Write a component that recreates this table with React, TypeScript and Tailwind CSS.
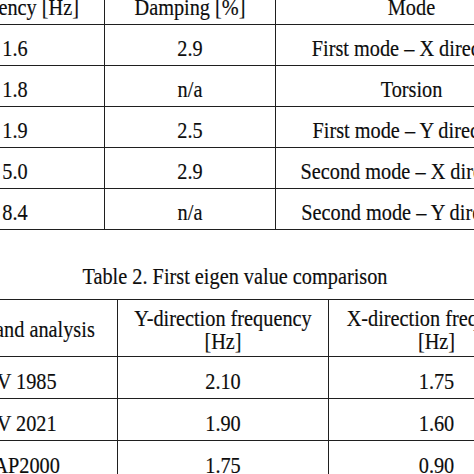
import React from 'react'

const modes = [
  { freq: '1.6', damping: '2.9', mode: 'First mode – X direction' },
  { freq: '1.8', damping: 'n/a', mode: 'Torsion' },
  { freq: '1.9', damping: '2.5', mode: 'First mode – Y direction' },
  { freq: '5.0', damping: '2.9', mode: 'Second mode – X direction' },
  { freq: '8.4', damping: 'n/a', mode: 'Second mode – Y direction' },
]

const comparison = [
  { label: 'SV 1985', y: '2.10', x: '1.75' },
  { label: 'SV 2021', y: '1.90', x: '1.60' },
  { label: 'SAP2000', y: '1.75', x: '0.90' },
]

// the scanned tables are slightly stretched vertically
const T = ({ children }: { children: React.ReactNode }) => (
  <span className="inline-block scale-y-[1.15] whitespace-nowrap">{children}</span>
)

export default function App() {
  return (
    <div
      className="w-[474px] h-[474px] overflow-hidden bg-white text-[#0d0d0d] text-[20.3px] leading-[23px] [-webkit-text-stroke:0.15px_#0d0d0d]"
      style={{ fontFamily: '"Liberation Serif", "Times New Roman", serif' }}
    >
      {/* Table 1, cropped on both sides */}
      <div className="ml-[-74px] w-[621px] mt-[-16px]">
        <div className="flex border-b border-[#1f1f1f]">
          <div className="w-[178px] pt-[11.5px] pb-[5.5px] text-center"><T>Frequency [Hz]</T></div>
          <div className="w-[171px] border-l border-[#1f1f1f] pt-[11.5px] pb-[5.5px] text-center"><T>Damping [%]</T></div>
          <div className="flex-1 border-l border-[#1f1f1f] pt-[11.5px] pb-[5.5px] text-center"><T>Mode</T></div>
        </div>
        {modes.map((r) => (
          <div key={r.mode} className="flex border-b border-[#1f1f1f]">
            <div className="w-[178px] pt-[11.5px] pb-[5.5px] text-center"><T>{r.freq}</T></div>
            <div className="w-[171px] border-l border-[#1f1f1f] pt-[11.5px] pb-[5.5px] text-center"><T>{r.damping}</T></div>
            <div className="flex-1 border-l border-[#1f1f1f] pt-[11.5px] pb-[5.5px] text-center"><T>{r.mode}</T></div>
          </div>
        ))}
      </div>

      <p className="mt-[35px] pr-[4px] text-center"><T>Table 2. First eigen value comparison</T></p>

      {/* Table 2 */}
      <div className="mt-[11px] ml-[-75px] w-[619px] border-t border-[#1f1f1f]">
        <div className="flex border-b border-[#1f1f1f] h-[57px]">
          <div className="w-[192px] pt-[2px] flex items-center justify-center"><T>Code and analysis</T></div>
          <div className="w-[211px] border-l border-[#1f1f1f] pt-[7px] text-center">
            <div><T>Y-direction frequency</T></div>
            <div><T>[Hz]</T></div>
          </div>
          <div className="flex-1 border-l border-[#1f1f1f] pt-[7px] text-center">
            <div><T>X-direction frequency</T></div>
            <div><T>[Hz]</T></div>
          </div>
        </div>
        {comparison.map((r) => (
          <div key={r.label} className="flex border-b border-[#1f1f1f]">
            <div className="w-[192px] pt-[13px] pb-[5px] text-center"><T>{r.label}</T></div>
            <div className="w-[211px] border-l border-[#1f1f1f] pt-[13px] pb-[5px] text-center"><T>{r.y}</T></div>
            <div className="flex-1 border-l border-[#1f1f1f] pt-[13px] pb-[5px] text-center"><T>{r.x}</T></div>
          </div>
        ))}
      </div>
    </div>
  )
}
